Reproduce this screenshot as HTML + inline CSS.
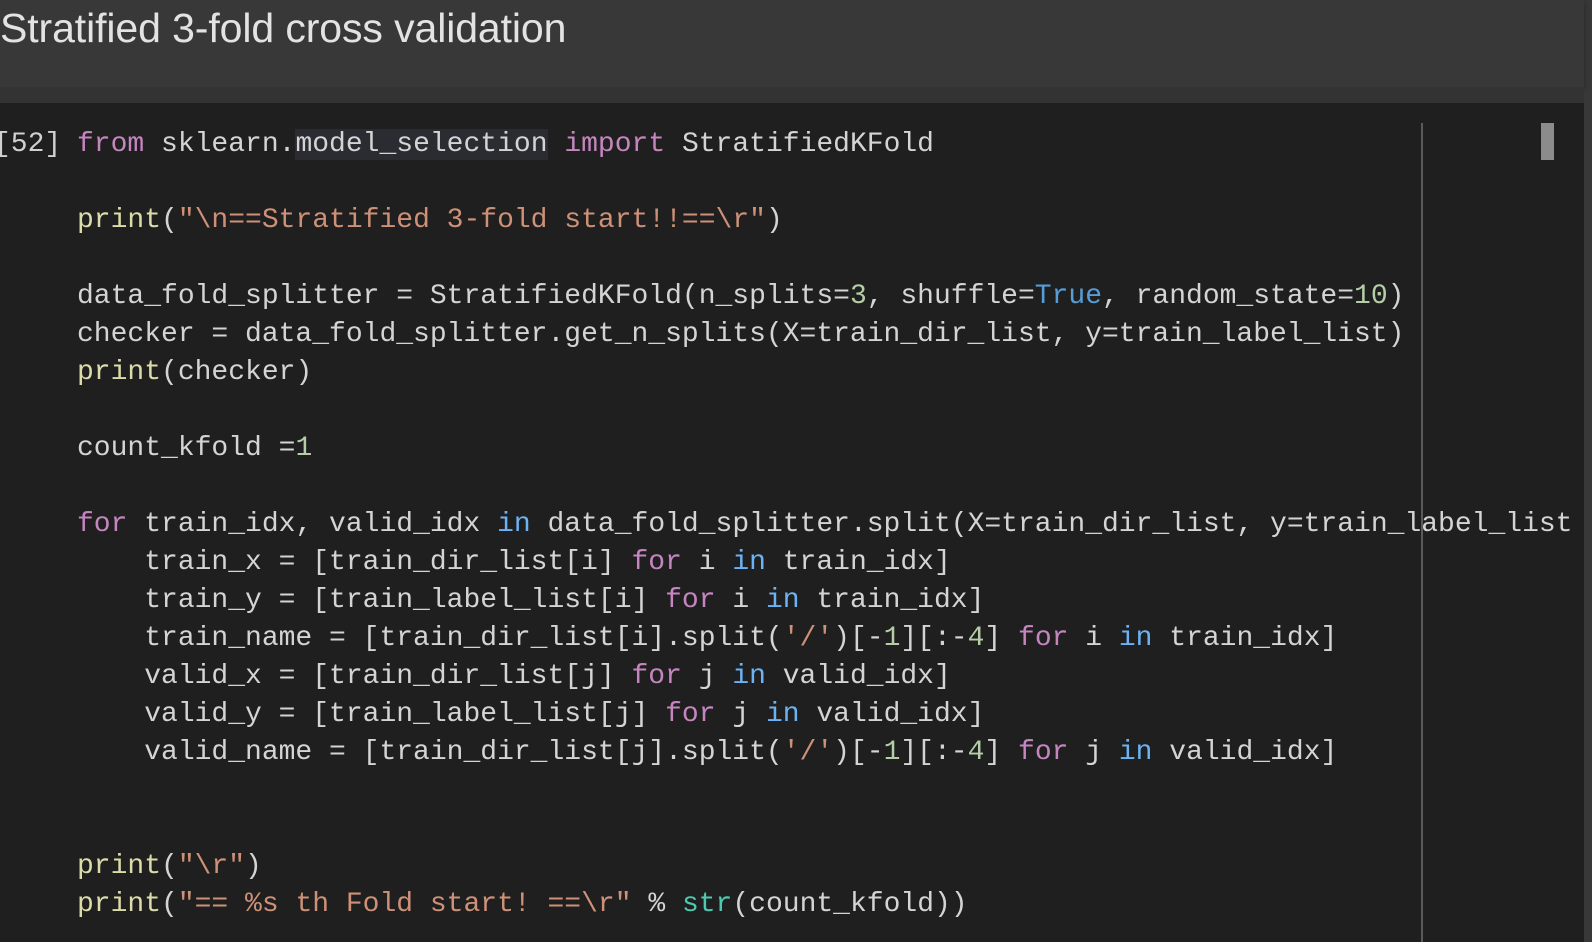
<!DOCTYPE html>
<html><head><meta charset="utf-8"><style>
html,body{margin:0;padding:0;width:1592px;height:942px;overflow:hidden;background:#383838;}
#hdr{position:absolute;left:0;top:0;width:1584px;height:87px;background:#383838;box-shadow:0 2px 6px rgba(0,0,0,.35);}
#hdr span{position:absolute;left:0;top:3px;font-family:"Liberation Sans",sans-serif;font-size:41px;color:#e3e3e3;line-height:50px;white-space:nowrap;letter-spacing:-0.1px;}
#gap{position:absolute;left:0;top:87px;width:1584px;height:16px;background:#333;}
#code{position:absolute;left:0;top:103px;width:1584px;height:839px;background:#1f1f1f;overflow:hidden;}
pre{position:absolute;left:77px;top:23px;margin:0;font-family:"Liberation Mono",monospace;font-size:28px;line-height:38px;color:#d4d4d4;white-space:pre;}
#prompt{position:absolute;left:-6px;top:23px;font-family:"Liberation Mono",monospace;font-size:28px;line-height:38px;color:#d0d0d0;}
.k{color:#c586c0}.f{color:#dcdcaa}.s{color:#ce9178}.n{color:#b5cea8}.b{color:#569cd6}.i{color:#6cb3f5}.t{color:#4ec9b0}
.hl{background:#2b2c31}
#vl{position:absolute;left:1421px;top:20px;width:2px;height:830px;background:#5a5a5a;}
#sb{position:absolute;left:1541px;top:20px;width:13px;height:37px;background:#8c8c8c;}
</style></head><body>
<div id="hdr"><span>Stratified 3-fold cross validation</span></div>
<div id="gap"></div>
<div id="code">
<div id="prompt">[52]</div>
<div id="vl"></div><div id="sb"></div>
<pre><span class="k">from</span> sklearn.<span class="hl">model_selection</span> <span class="k">import</span> StratifiedKFold

<span class="f">print</span>(<span class="s">"\n==Stratified 3-fold start!!==\r"</span>)

data_fold_splitter = StratifiedKFold(n_splits=<span class="n">3</span>, shuffle=<span class="b">True</span>, random_state=<span class="n">10</span>)
checker = data_fold_splitter.get_n_splits(X=train_dir_list, y=train_label_list)
<span class="f">print</span>(checker)

count_kfold =<span class="n">1</span>

<span class="k">for</span> train_idx, valid_idx <span class="i">in</span> data_fold_splitter.split(X=train_dir_list, y=train_label_list
    train_x = [train_dir_list[i] <span class="k">for</span> i <span class="i">in</span> train_idx]
    train_y = [train_label_list[i] <span class="k">for</span> i <span class="i">in</span> train_idx]
    train_name = [train_dir_list[i].split(<span class="s">'/'</span>)[-<span class="n">1</span>][:-<span class="n">4</span>] <span class="k">for</span> i <span class="i">in</span> train_idx]
    valid_x = [train_dir_list[j] <span class="k">for</span> j <span class="i">in</span> valid_idx]
    valid_y = [train_label_list[j] <span class="k">for</span> j <span class="i">in</span> valid_idx]
    valid_name = [train_dir_list[j].split(<span class="s">'/'</span>)[-<span class="n">1</span>][:-<span class="n">4</span>] <span class="k">for</span> j <span class="i">in</span> valid_idx]


<span class="f">print</span>(<span class="s">"\r"</span>)
<span class="f">print</span>(<span class="s">"== %s th Fold start! ==\r"</span> % <span class="t">str</span>(count_kfold))</pre>
</div>
</body></html>
